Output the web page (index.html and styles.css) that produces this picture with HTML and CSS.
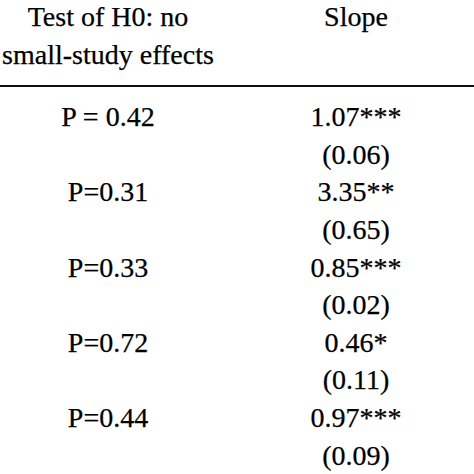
FILE: index.html
```html
<!DOCTYPE html>
<html>
<head>
<meta charset="utf-8">
<link rel="stylesheet" href="styles.css">
</head>
<body>
<div class="table">
  <div class="row head">
    <div class="cell">Test of H0: no<br>small-study effects</div>
    <div class="cell">Slope</div>
  </div>
  <div class="body">
    <div class="row">
      <div class="cell">P = 0.42</div>
      <div class="cell">1.07***<br>(0.06)</div>
    </div>
    <div class="row">
      <div class="cell">P=0.31</div>
      <div class="cell">3.35**<br>(0.65)</div>
    </div>
    <div class="row">
      <div class="cell">P=0.33</div>
      <div class="cell">0.85***<br>(0.02)</div>
    </div>
    <div class="row">
      <div class="cell">P=0.72</div>
      <div class="cell">0.46*<br>(0.11)</div>
    </div>
    <div class="row">
      <div class="cell">P=0.44</div>
      <div class="cell">0.97***<br>(0.09)</div>
    </div>
  </div>
</div>
</body>
</html>
```
FILE: styles.css
```css
html, body {
  margin: 0;
  padding: 0;
  background: #fff;
  overflow: hidden;
}
.table {
  width: 496px;
  margin-top: -2px;
  font-family: "Liberation Serif", serif;
  font-size: 28px;
  line-height: 37.6px;
  color: #000;
  -webkit-text-stroke: 0.25px #000;
}
.row {
  display: grid;
  grid-template-columns: 216px 280px;
}
.cell {
  text-align: center;
  white-space: nowrap;
}
.head {
  padding-bottom: 12px;
  border-bottom: 2px solid #111;
}
.body {
  padding-top: 11px;
}
```
